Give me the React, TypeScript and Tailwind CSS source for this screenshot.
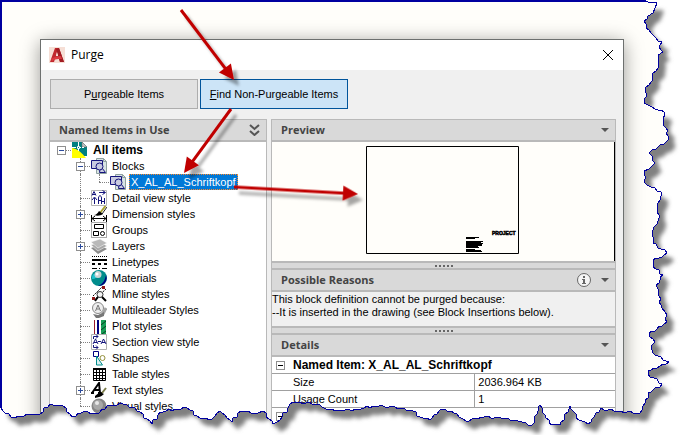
import { useState, type ReactNode } from "react";

interface TreeItem {
  label: string;
  icon: ReactNode;
  expandable?: boolean;
}

type Point = [number, number];

const TORN_EDGE: Point[] = [
  [645, 1], [657, 3], [655, 8], [653, 13], [648, 16], [644, 21], [646, 24], [646, 28], [651, 33], [656, 38],
  [662, 42], [659, 47], [663, 52], [658, 55], [659, 60], [656, 71], [652, 76], [653, 80], [646, 87], [646, 93],
  [644, 103], [652, 107], [664, 112], [663, 125], [668, 131], [666, 133], [668, 140], [656, 149], [649, 153],
  [655, 163], [649, 169], [644, 171], [645, 176], [644, 182], [651, 187], [661, 192], [660, 200], [657, 206],
  [659, 218], [653, 230], [653, 243], [667, 253], [659, 258], [653, 260], [653, 267], [663, 275], [656, 285],
  [658, 293], [662, 308], [665, 312], [667, 322], [649, 334], [655, 342], [651, 346], [653, 353], [669, 362],
  [648, 371], [648, 374], [662, 384], [648, 393], [648, 398], [643, 406], [640, 413], [614, 411], [601, 408],
  [594, 417], [588, 424], [579, 420], [570, 406], [560, 425], [552, 425], [546, 418], [540, 405], [532, 425],
  [518, 421], [501, 418], [481, 417], [466, 421], [459, 417], [451, 411], [441, 409], [430, 420], [420, 417],
  [413, 411], [395, 407], [373, 406], [358, 409], [335, 411], [326, 409], [319, 404], [293, 402], [288, 408],
  [280, 420], [273, 424], [263, 411], [258, 413], [245, 411], [238, 413], [232, 422], [220, 411], [212, 419],
  [200, 418], [187, 408], [175, 409], [160, 412], [152, 424], [147, 419], [135, 408], [123, 404], [107, 406],
  [98, 414], [88, 412], [78, 413], [72, 417], [63, 406], [50, 404], [40, 414], [30, 414], [15, 418], [5, 413],
  [1, 408],
];

// Adds small alternating bumps between the points, so the edge looks ripped
function roughen(points: Point[]) {
  const out: Point[] = [];
  points.forEach(([x, y], i) => {
    out.push([x, y]);
    const next = points[i + 1];
    if (!next) return;
    const length = Math.hypot(next[0] - x, next[1] - y);
    const steps = Math.floor(length / 3);
    for (let s = 1; s < steps; s++) {
      const bump = ((i * 7 + s * 5) % 3) - 1;
      const t = s / steps;
      out.push([
        Math.round(x + (next[0] - x) * t - ((next[1] - y) / length) * bump),
        Math.round(y + (next[1] - y) * t + ((next[0] - x) / length) * bump),
      ]);
    }
  });
  return out.map((p) => p.join(" ")).join("L");
}

const EDGE = roughen(TORN_EDGE);

function Icon({ children }: { children: ReactNode }) {
  return (
    <svg viewBox="0 0 16 16" className="ml-px size-4 shrink-0" fill="none" aria-hidden="true">
      {children}
    </svg>
  );
}

const allItemsIcon = (
  <Icon>
    <path d="M0 0h10l5 5v9H0z" fill="#008080" />
    <path d="M10 0v5h5z" fill="#c0c0c0" stroke="#606060" strokeWidth=".5" />
    <path d="M0 6c6 1 10 5 14 10H0z" fill="#ffff00" />
    <path d="M0 5.500h12M6.500 0v9" stroke="#fff" strokeDasharray="4 1" />
    <path d="M5.500 4.500h2v2h-2z" fill="#008080" stroke="#fff" />
  </Icon>
);

const blockIcon = (
  <Icon>
    <path d="M5.500.500h7l3 3v12h-10z" fill="#d8e4e4" stroke="#8fa0a0" />
    <path d="M12.500.500v3h3" stroke="#8fa0a0" />
    <path d="M.500 2.500h11v8H.500z" fill="#c9cbe0" stroke="#14147c" />
    <path d="M9.500 8l5 6.500h-6z" fill="#c9cbe0" stroke="#14147c" />
    <circle cx="8.500" cy="8.500" r="3.500" fill="#c9cbe0" stroke="#14147c" />
  </Icon>
);

const detailViewIcon = (
  <Icon>
    <path d="M.5.500h15v15H.5z" stroke="#b4b4b4" />
    <path d="M1 5.500l2-4 2 4M2 4.500h2M11.500.500l3 2-3 2M8 2.500h6" stroke="#14147c" />
    <path d="M3.500 14V8M1 10l2.500-3L6 10M7.500 14V8c0-3 3-3 3 0v6M7.500 10.500h3M13.500 8v6M10.500 11.500h3" stroke="#14147c" />
  </Icon>
);

const dimensionIcon = (
  <Icon>
    <path d="M.5 9v7M15.500 9v7M1 12.500h14M4 10l-3 2.500L4 15M12 10l3 2.500-3 2.500" stroke="#000" />
    <path d="M14.500 0L9 7" stroke="#a8a030" strokeWidth="2" />
    <path d="M16 1l-5 7" stroke="#222" />
    <path d="M8 5l4 3c-3 2-6 2-9 1 2 0 4-2 5-4z" fill="#000" />
  </Icon>
);

const groupsIcon = (
  <Icon>
    <path d="M.5.500h15v15H.5z" stroke="#555" strokeDasharray="1 1" />
    <path d="M3.500 2.500h9v4h-9zM2.500 9.500h5v4h-5z" stroke="#000" />
    <circle cx="11.500" cy="11.500" r="2" stroke="#000" />
  </Icon>
);

const layersIcon = (
  <Icon>
    <path d="M0 10l9-3 7 4-9 5z" fill="#8c8c8c" />
    <path d="M0 7l9-3 7 4-9 5z" fill="#a8a8a8" stroke="#fff" strokeWidth=".5" />
    <path d="M0 4l9-3 7 4-9 5z" fill="#b9b9b9" stroke="#fff" strokeWidth=".5" />
  </Icon>
);

const linetypesIcon = (
  <Icon>
    <path d="M1 2.500h15" stroke="#000" strokeDasharray="1 1" />
    <path d="M1 6h15" stroke="#000" strokeWidth="2" />
    <path d="M1 10h15" stroke="#000" strokeWidth="2" strokeDasharray="3 3" />
    <path d="M1 14.500h15" stroke="#000" strokeDasharray="5 2 1 2" />
  </Icon>
);

const materialsIcon = (
  <Icon>
    <circle cx="8" cy="8" r="8" fill="#008c8c" />
    <path d="M15 5a8 8 0 0 1-8 11c5-2 7-6 8-11z" fill="#000080" />
    <path d="M2 4a8 8 0 0 0-1 5c3 0 6-2 7-4z" fill="#20c4d0" />
    <circle cx="7" cy="4.500" r="3.500" fill="#c8d4d4" />
    <circle cx="6" cy="4" r="1.500" fill="#fff" />
  </Icon>
);

const mlineIcon = (
  <Icon>
    <path d="M2 10L11 1M3 14L15 3" stroke="#000" strokeDasharray="2 1" />
    <path d="M11 0h3v3h-3zM1 11h3v3H1z" fill="#901818" />
    <circle cx="9" cy="8.500" r="3" fill="#f4f4f4" stroke="#333" />
    <path d="M7 11L4 15M11 11l4 4" stroke="#000" strokeWidth="2" />
  </Icon>
);

const multileaderIcon = (
  <Icon>
    <circle cx="7" cy="6" r="5.500" fill="#eee" stroke="#888" />
    <path d="M4.500 9L7 3l2.500 6M5.500 7h3" stroke="#777" />
    <path d="M15 6l-3 6" stroke="#a5a5a5" strokeWidth="3" />
    <path d="M2 12l5 1 6-3v4l-5 2H5z" fill="#777" />
  </Icon>
);

const plotIcon = (
  <Icon>
    <path d="M3.500 2v14" stroke="#981c30" />
    <path d="M7 2v14" stroke="#000080" strokeWidth="2" />
    <path d="M10 2h5v14h-5z" fill="#18a058" />
    <path d="M10 7l5-4M10 12l5-4M11 16l4-3" stroke="#064020" />
  </Icon>
);

const sectionViewIcon = (
  <Icon>
    <path d="M.5.500h15v15H.5z" stroke="#b0b0b0" />
    <path d="M7 2.500H2.500V5M7 13.500H2.500V11M5 .500l2 2-2 2M5 11.500l2 2-2 2" stroke="#14147c" />
    <path d="M2 10l2.500-5L7 10M3 8.500h3M7 7.500h3M10 10l2.500-5 2.500 5M11 8.500h3" stroke="#14147c" />
  </Icon>
);

const shapesIcon = (
  <Icon>
    <path d="M2.500 1.500h5v5h-5z" stroke="#000080" strokeWidth="1" />
    <circle cx="11.500" cy="8" r="2.500" stroke="#94903c" />
    <path d="M5.500 6v9h6z" fill="#d8f0f0" stroke="#008c8c" />
  </Icon>
);

const tableIcon = (
  <Icon>
    <path d="M2.500 2.500h12v12h-12zM3 6.500h12M3 9.500h12M3 12.500h12M5.500 3v12M8.500 3v12M11.500 3v12" stroke="#000" />
    <path d="M2 3h13" stroke="#000" strokeWidth="2" />
  </Icon>
);

const textIcon = (
  <Icon>
    <path d="M1 11L8 1l1 10M3 8h6M0 11h3M7 11h4" stroke="#000" strokeWidth="2" />
    <path d="M15 6l-4 5" stroke="#7a7a48" strokeWidth="2" />
    <path d="M4 14l5-4 4 2c-2 2-4 3-5 3l-4 1z" fill="#000" />
  </Icon>
);

const visualIcon = (
  <Icon>
    <circle cx="8" cy="8" r="7.500" fill="#868686" />
    <circle cx="7" cy="7" r="5" fill="#a8a8a8" />
    <circle cx="6" cy="5" r="2" fill="#e8e8e8" />
  </Icon>
);

const ITEMS: TreeItem[] = [
  { label: "Detail view style", icon: detailViewIcon },
  { label: "Dimension styles", icon: dimensionIcon, expandable: true },
  { label: "Groups", icon: groupsIcon },
  { label: "Layers", icon: layersIcon, expandable: true },
  { label: "Linetypes", icon: linetypesIcon },
  { label: "Materials", icon: materialsIcon },
  { label: "Mline styles", icon: mlineIcon },
  { label: "Multileader Styles", icon: multileaderIcon },
  { label: "Plot styles", icon: plotIcon },
  { label: "Section view style", icon: sectionViewIcon },
  { label: "Shapes", icon: shapesIcon },
  { label: "Table styles", icon: tableIcon },
  { label: "Text styles", icon: textIcon, expandable: true },
  { label: "Visual styles", icon: visualIcon },
];

function Toggle({ open, label, dark }: { open: boolean; label: string; dark?: boolean }) {
  return (
    <button
      type="button"
      aria-label={`${open ? "Collapse" : "Expand"} ${label}`}
      className={`relative block size-[9px] border border-[#8f8f8f] bg-white ${dark ? "text-black" : "text-[#2b4a9b]"}`}
    >
      <svg viewBox="0 0 7 7" className="size-[7px]" stroke="currentColor" aria-hidden="true">
        <path d={open ? "M1 3.500h5" : "M1 3.500h5M3.500 1v5"} />
      </svg>
    </button>
  );
}

function Branch({ line, across, children }: { line: "none" | "full" | "half"; across?: boolean; children?: ReactNode }) {
  return (
    <span className="relative flex h-4 w-[19px] shrink-0 items-center justify-center">
      {line === "full" && <span className="absolute top-0 left-[9px] h-4 border-l border-dotted border-[#808080]" />}
      {line === "half" && <span className="absolute top-0 left-[9px] h-2 border-l border-dotted border-[#808080]" />}
      {across && <span className="absolute top-2 right-0 left-[9px] border-t border-dotted border-[#808080]" />}
      {children}
    </span>
  );
}

function Splitter() {
  return (
    <div className="flex h-[9px] items-center justify-center gap-0.5 border-y-2 border-[#b9b9b9] bg-[#d9d9d9]">
      {[0, 1, 2, 3, 4].map((i) => (
        <span key={i} className="size-0.5 bg-[#666]" />
      ))}
    </div>
  );
}

function PanelHeader({ title, children }: { title: string; children: ReactNode }) {
  return (
    <header className="flex h-[22px] items-center justify-between border-b-2 border-[#b9b9b9] bg-[#d9d9d9] pr-1.5 pl-[9px] font-['Open_Sans','Noto_Sans',sans-serif] text-[#444]">
      <h2 className="text-[11px] leading-5 font-bold whitespace-nowrap">{title}</h2>
      <div className="flex items-center gap-2.5">{children}</div>
    </header>
  );
}

function Collapse({ label }: { label: string }) {
  return (
    <button type="button" aria-label={label}>
      <svg viewBox="0 0 8 4" className="h-1 w-2" fill="#555" aria-hidden="true">
        <path d="M0 0h8L4 4z" />
      </svg>
    </button>
  );
}

function AutocadLogo() {
  return (
    <svg viewBox="0 0 16 16" className="size-4" aria-hidden="true">
      <path d="M0 0h16v16H0z" fill="#f6dfd6" />
      <path d="M6 1h4l5 14h-4l-1-3H6l-1 3H1zM8 5L7 9h2.500z" fill="#c1272d" fillRule="evenodd" />
      <path d="M10 1l5 14h-4L7 2z" fill="#a01c22" />
      <path d="M2 12c3-2 6-3 10-3l1 3c-4 0-7 0-10 2z" fill="#d93a40" />
      <path d="M8 5L7 9h2z" fill="#f6dfd6" />
    </svg>
  );
}

function Arrow({ from, to }: { from: Point; to: Point }) {
  const length = Math.hypot(to[0] - from[0], to[1] - from[1]);
  const angle = (Math.atan2(to[1] - from[1], to[0] - from[0]) * 180) / Math.PI;
  return (
    <g transform={`translate(${from[0]} ${from[1]}) rotate(${angle})`}>
      <path d={`M0 0H${length - 12}`} stroke="#c00000" strokeWidth="3" />
      <path d={`M${length - 15} -7.500L${length} 0L${length - 15} 7.500z`} fill="#c00000" />
    </g>
  );
}

function Annotations() {
  return (
    <svg
      viewBox="0 0 681 435"
      preserveAspectRatio="none"
      className="pointer-events-none absolute inset-0 size-full"
      fill="none"
      aria-hidden="true"
    >
      <defs>
        <filter id="arrow-shadow" x="-20%" y="-20%" width="150%" height="150%">
          <feDropShadow dx="5" dy="6" stdDeviation="1.500" floodColor="#000" floodOpacity=".35" />
        </filter>
        <filter id="page-shadow">
          <feGaussianBlur stdDeviation="2" />
        </filter>
        <clipPath id="outside">
          <path d={`M0 0H681V435H0ZM0 0L${EDGE}Z`} clipRule="evenodd" />
        </clipPath>
      </defs>
      <g filter="url(#arrow-shadow)">
        <Arrow from={[181, 10]} to={[234, 80]} />
        <Arrow from={[231, 109]} to={[184, 173]} />
        <Arrow from={[234, 187]} to={[358, 194]} />
      </g>
      <g clipPath="url(#outside)">
        <path d="M0 0H681V435H0z" fill="#fff" />
        <path d={`M8 8L${EDGE}Z`} transform="translate(7 8)" fill="#808080" filter="url(#page-shadow)" />
      </g>
      <path d={`M${EDGE}`} stroke="#0000a0" shapeRendering="crispEdges" />
      <path d="M1 408V1H646" stroke="#0000a0" strokeWidth="2" />
    </svg>
  );
}

export default function App() {
  const [tab, setTab] = useState<"purgeable" | "non-purgeable">("non-purgeable");

  const tabClass = (active: boolean) =>
    `h-[30px] w-[148px] border whitespace-nowrap text-black ${
      active ? "border-[#00549b] bg-[#cce4f7]" : "border-[#adadad] bg-[#e1e1e1]"
    }`;

  return (
    <div className="relative h-screen overflow-hidden bg-[#fffefa] pt-[39px] pr-[57px] pl-10 font-['Liberation_Sans',Arial,sans-serif] text-[11px] text-black">
      <main className="border border-[#6d706f] bg-[#f0f0f0] shadow-[0_3px_18px_rgba(0,0,0,0.4)]">
        <div className="flex h-[30px] items-center gap-1.5 bg-white pr-2.5 pl-2">
          <AutocadLogo />
          <h1 className="flex-1 font-['Open_Sans','Noto_Sans',sans-serif] text-[12px]">Purge</h1>
          <button type="button" aria-label="Close">
            <svg viewBox="0 0 10 10" className="size-2.5" stroke="#000" aria-hidden="true">
              <path d="M0 0l10 10M10 0L0 10" />
            </svg>
          </button>
        </div>

        <div className="flex gap-0.5 px-[9px] pt-[9px]">
          <button type="button" onClick={() => setTab("purgeable")} className={tabClass(tab === "purgeable")}>
            P<span className="underline">u</span>rgeable Items
          </button>
          <button type="button" onClick={() => setTab("non-purgeable")} className={tabClass(tab === "non-purgeable")}>
            <span className="underline">F</span>ind Non-Purgeable Items
          </button>
        </div>

        <div className="flex gap-1 pt-2.5 pr-[7px] pb-2 pl-2">
          <section className="w-[218px] shrink-0 border border-[#b9b9b9] bg-white">
            <PanelHeader title="Named Items in Use">
              <button type="button" aria-label="Collapse panel">
                <svg viewBox="0 0 11 12" className="h-3 w-[11px]" fill="none" stroke="#555" strokeWidth="2" aria-hidden="true">
                  <path d="M1 1l4.500 4L10 1M1 7l4.500 4L10 7" />
                </svg>
              </button>
            </PanelHeader>
            <ul className="pl-0.5 leading-4 whitespace-nowrap">
              <li>
                <div className="flex h-4 items-center">
                  <Branch line="none" across>
                    <Toggle open label="All items" />
                  </Branch>
                  {allItemsIcon}
                  <span className="pl-[5px] text-[12px] font-bold">All items</span>
                </div>
                <ul className="pl-[19px]">
                  <li>
                    <div className="flex h-4 items-center">
                      <Branch line="full" across>
                        <Toggle open label="Blocks" />
                      </Branch>
                      {blockIcon}
                      <span className="pl-[5px]">Blocks</span>
                    </div>
                    <div className="flex h-4 items-center">
                      <Branch line="full" />
                      <Branch line="half" across />
                      {blockIcon}
                      <span className="ml-[3px] border border-dotted border-[#ff8728] bg-[#0078d7] px-px leading-[14px] text-white">
                        X_AL_AL_Schriftkopf
                      </span>
                    </div>
                  </li>
                  {ITEMS.map((item, i) => (
                    <li key={item.label} className="flex h-4 items-center">
                      <Branch line={i === ITEMS.length - 1 ? "half" : "full"} across>
                        {item.expandable && <Toggle open={false} label={item.label} />}
                      </Branch>
                      {item.icon}
                      <span className="pl-[5px]">{item.label}</span>
                    </li>
                  ))}
                </ul>
              </li>
            </ul>
          </section>

          <section className="min-w-0 flex-1 border border-[#b9b9b9]">
            <PanelHeader title="Preview">
              <Collapse label="Collapse preview" />
            </PanelHeader>
            <div className="flex h-[119px] items-start justify-center border-r border-black bg-[#fffefa] pt-1 pr-0.5">
              <svg viewBox="0 0 153 108" className="h-[108px] w-[153px]" fill="none" aria-hidden="true">
                <path d="M.5.500h152v107H.5z" stroke="#000" />
                <text x="126" y="89" fontSize="5" fontWeight="bold" fill="#000" stroke="#000" strokeWidth=".5">
                  PROJECT
                </text>
                <path
                  d="M100 91.500h13M100 92.500h9M100 95.500h17M100 96.500h15M100 97.500h17M100 98.500h16M100 99.500h16M100 100.500h12M100 101.500h13M100 103.500h9M100 104.500h15M100 105.500h16"
                  stroke="#000"
                />
              </svg>
            </div>
            <Splitter />

            <PanelHeader title="Possible Reasons">
              <button type="button" aria-label="About possible reasons">
                <svg viewBox="0 0 14 14" className="size-3.5" fill="none" stroke="#666" aria-hidden="true">
                  <circle cx="7" cy="7" r="6.500" fill="#f4f4f4" />
                  <path d="M7 3v2" strokeWidth="2" />
                  <path d="M5 6.500h2M5 10.500h4" />
                  <path d="M7 6v5" strokeWidth="2" />
                </svg>
              </button>
              <Collapse label="Collapse possible reasons" />
            </PanelHeader>
            <p className="h-[34px] pt-px leading-[13px] whitespace-nowrap">
              This block definition cannot be purged because:
              <br />
              --It is inserted in the drawing (see Block Insertions below).
            </p>
            <Splitter />

            <PanelHeader title="Details">
              <Collapse label="Collapse details" />
            </PanelHeader>
            <table className="w-full table-fixed bg-white text-left leading-4">
              <colgroup>
                <col className="w-[21px]" />
                <col className="w-[53%]" />
                <col />
              </colgroup>
              <tbody>
                <tr className="border-b border-[#a0a0a0]">
                  <td className="p-0 pl-1">
                    <Toggle open label="Named Item" dark />
                  </td>
                  <th colSpan={2} className="p-0 text-[12px] leading-4 font-bold">
                    Named Item: X_AL_AL_Schriftkopf
                  </th>
                </tr>
                <tr className="border-b border-[#a0a0a0]">
                  <td />
                  <th className="p-0 font-normal">Size</th>
                  <td className="border-l border-[#a0a0a0] p-0 pl-[3px]">2036.964 KB</td>
                </tr>
                <tr className="border-b border-[#a0a0a0]">
                  <td />
                  <th className="p-0 font-normal">Usage Count</th>
                  <td className="border-l border-[#a0a0a0] p-0 pl-[3px]">1</td>
                </tr>
                <tr>
                  <td className="p-0 py-1 pl-1">
                    <Toggle open label="Block Insertions" dark />
                  </td>
                  <th colSpan={2} />
                </tr>
              </tbody>
            </table>
          </section>
        </div>
      </main>
      <Annotations />
    </div>
  );
}
